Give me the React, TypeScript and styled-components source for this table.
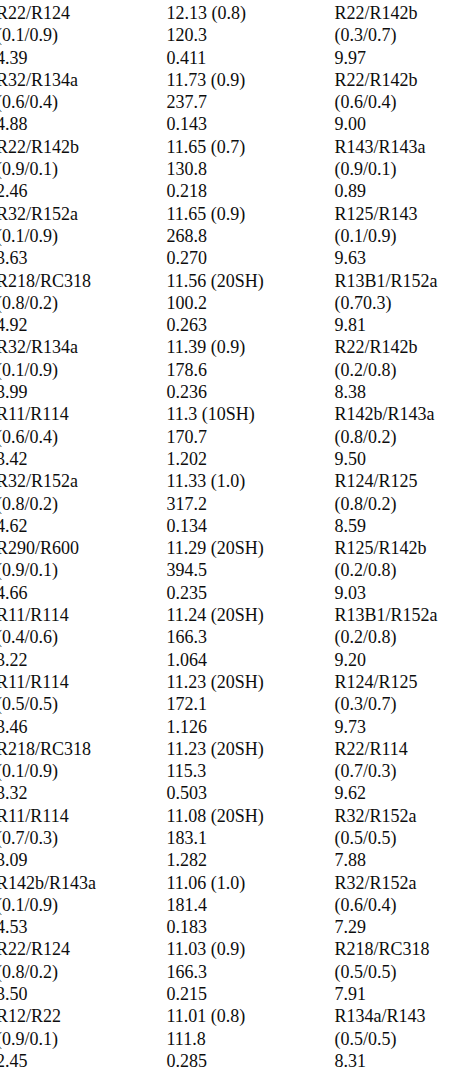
import React from 'react';
import styled, { createGlobalStyle } from 'styled-components';

const GlobalStyle = createGlobalStyle`
  html, body {
    margin: 0;
    padding: 0;
    background: #ffffff;
  }
  body {
    overflow: hidden;
  }
`;

const Page = styled.div`
  width: 474px;
  height: 1083px;
  overflow: hidden;
  background: #ffffff;
`;

// the page is a crop of a wider table, so the first column runs off the left edge
const Table = styled.div`
  margin-left: -4px;
  padding-top: 2px;
  display: flex;
  flex-direction: column;
  font-family: 'Liberation Serif', 'Times New Roman', serif;
  font-size: 18px;
  line-height: 22.3px;
  color: #0d0d0d;
`;

const Row = styled.div`
  display: grid;
  grid-template-columns: 170.5px 168px 1fr;
`;

const Cell = styled.div`
  display: flex;
  flex-direction: column;
  white-space: nowrap;
`;

const Line = styled.span`
  display: block;
`;

type Entry = [string, string, string];

const rows: Entry[][] = [
  [['R22/R124', '(0.1/0.9)', '4.39'], ['12.13 (0.8)', '120.3', '0.411'], ['R22/R142b', '(0.3/0.7)', '9.97']],
  [['R32/R134a', '(0.6/0.4)', '4.88'], ['11.73 (0.9)', '237.7', '0.143'], ['R22/R142b', '(0.6/0.4)', '9.00']],
  [['R22/R142b', '(0.9/0.1)', '2.46'], ['11.65 (0.7)', '130.8', '0.218'], ['R143/R143a', '(0.9/0.1)', '0.89']],
  [['R32/R152a', '(0.1/0.9)', '3.63'], ['11.65 (0.9)', '268.8', '0.270'], ['R125/R143', '(0.1/0.9)', '9.63']],
  [['R218/RC318', '(0.8/0.2)', '4.92'], ['11.56 (20SH)', '100.2', '0.263'], ['R13B1/R152a', '(0.70.3)', '9.81']],
  [['R32/R134a', '(0.1/0.9)', '3.99'], ['11.39 (0.9)', '178.6', '0.236'], ['R22/R142b', '(0.2/0.8)', '8.38']],
  [['R11/R114', '(0.6/0.4)', '3.42'], ['11.3 (10SH)', '170.7', '1.202'], ['R142b/R143a', '(0.8/0.2)', '9.50']],
  [['R32/R152a', '(0.8/0.2)', '4.62'], ['11.33 (1.0)', '317.2', '0.134'], ['R124/R125', '(0.8/0.2)', '8.59']],
  [['R290/R600', '(0.9/0.1)', '4.66'], ['11.29 (20SH)', '394.5', '0.235'], ['R125/R142b', '(0.2/0.8)', '9.03']],
  [['R11/R114', '(0.4/0.6)', '3.22'], ['11.24 (20SH)', '166.3', '1.064'], ['R13B1/R152a', '(0.2/0.8)', '9.20']],
  [['R11/R114', '(0.5/0.5)', '3.46'], ['11.23 (20SH)', '172.1', '1.126'], ['R124/R125', '(0.3/0.7)', '9.73']],
  [['R218/RC318', '(0.1/0.9)', '3.32'], ['11.23 (20SH)', '115.3', '0.503'], ['R22/R114', '(0.7/0.3)', '9.62']],
  [['R11/R114', '(0.7/0.3)', '3.09'], ['11.08 (20SH)', '183.1', '1.282'], ['R32/R152a', '(0.5/0.5)', '7.88']],
  [['R142b/R143a', '(0.1/0.9)', '4.53'], ['11.06 (1.0)', '181.4', '0.183'], ['R32/R152a', '(0.6/0.4)', '7.29']],
  [['R22/R124', '(0.8/0.2)', '3.50'], ['11.03 (0.9)', '166.3', '0.215'], ['R218/RC318', '(0.5/0.5)', '7.91']],
  [['R12/R22', '(0.9/0.1)', '2.45'], ['11.01 (0.8)', '111.8', '0.285'], ['R134a/R143', '(0.5/0.5)', '8.31']],
];

export default function App() {
  return (
    <Page>
      <GlobalStyle />
      <Table>
        {rows.map((row, i) => (
          <Row key={i}>
            {row.map((cell, j) => (
              <Cell key={j}>
                {cell.map((text, k) => (
                  <Line key={k}>{text}</Line>
                ))}
              </Cell>
            ))}
          </Row>
        ))}
      </Table>
    </Page>
  );
}
